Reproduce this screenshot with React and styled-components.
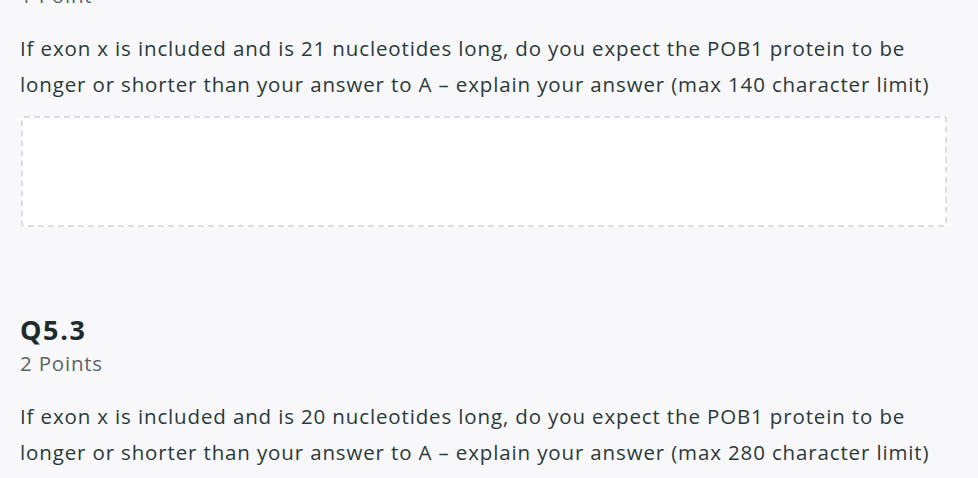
import React from "react";
import styled, { createGlobalStyle } from "styled-components";

const GlobalStyle = createGlobalStyle`
  html, body { margin: 0; padding: 0; background: #f8f8fa; }
  body { font-family: "Open Sans", "Noto Sans", sans-serif; overflow: hidden; }
`;

const Page = styled.main`
  width: 978px;
  height: 478px;
  overflow: hidden;
  box-sizing: border-box;
  padding: 0 31px 0 20px;
  background: #f8f8fa;
`;

const Question = styled.section`
  display: flex;
  flex-direction: column;
  margin-top: ${p => p.$offset || 0}px;
`;

const Title = styled.h2`
  margin: 0;
  font-size: 27px;
  line-height: 30px;
  font-weight: 700;
  color: #1d2b2b;
  letter-spacing: 1.6px;
`;

const Points = styled.div`
  margin-top: ${p => (p.$first ? 0 : 4)}px;
  font-size: 20.5px;
  line-height: 28px;
  color: #5a6566;
  letter-spacing: 0.8px;
`;

const Prompt = styled.p`
  margin: 21px 0 0;
  font-size: 20.5px;
  line-height: 36px;
  color: #2b3939;
  letter-spacing: 0.86px;
`;

const Answer = styled.textarea`
  display: block;
  margin: 14px 0 88px 1px;
  width: 926px;
  height: 111px;
  box-sizing: border-box;
  border: 2px dashed #dcdfe2;
  border-radius: 3px;
  background: #ffffff;
  resize: none;
  outline: none;
  font: inherit;
`;

export default function App() {
  return (
    <Page>
      <GlobalStyle />
      <Question $offset={-19}>
        <Points $first>1 Point</Points>
        <Prompt>
          If exon x is included and is 21 nucleotides long, do you expect the POB1 protein to be
          longer or shorter than your answer to A – explain your answer (max 140 character limit)
        </Prompt>
        <Answer aria-label="Answer for Q5.2" />
      </Question>
      <Question>
        <Title>Q5.3</Title>
        <Points>2 Points</Points>
        <Prompt>
          If exon x is included and is 20 nucleotides long, do you expect the POB1 protein to be
          longer or shorter than your answer to A – explain your answer (max 280 character limit)
        </Prompt>
      </Question>
    </Page>
  );
}
